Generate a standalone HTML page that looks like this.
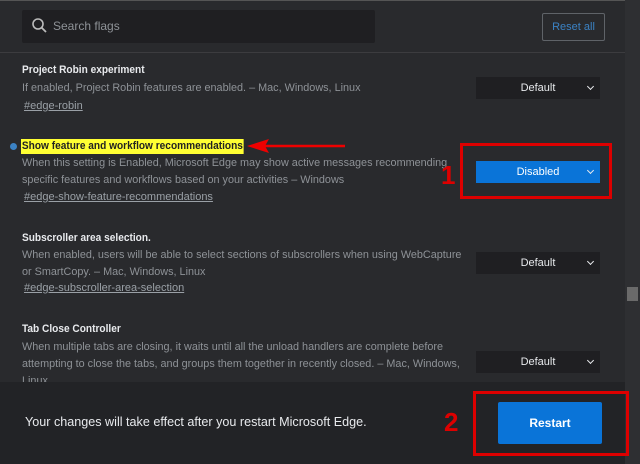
<!DOCTYPE html>
<html><head><style>
body{margin:0;width:640px;height:464px;background:#292a2d;font-family:"Liberation Sans",Arial,sans-serif;position:relative;overflow:hidden;color:#9aa0a6}
.abs{position:absolute}
.t{color:#e8eaed;font-weight:bold;font-size:11px;transform-origin:0 50%;transform:scaleX(0.92);white-space:nowrap}
.d{font-size:11px;line-height:17px;color:#8e9297;white-space:nowrap;transform-origin:0 0;transform:scaleX(0.985)}
.l{font-size:11px;color:#9aa0a6;text-decoration:underline}
.sel{position:absolute;left:476px;width:124px;height:22px;background:#1f1f22;color:#e8eaed;font-size:11px;line-height:22px;text-align:center}
.sel:after{content:"";position:absolute;right:7px;top:7px;width:4px;height:4px;border-right:1.5px solid #e8eaed;border-bottom:1.5px solid #e8eaed;transform:rotate(45deg)}
</style></head><body>
<div class="abs" style="left:0;top:0;width:640px;height:1px;background:#555"></div>
<div class="abs" style="left:0;top:52px;width:625px;height:1px;background:#3c3c3f"></div>
<div class="abs" style="left:22px;top:10px;width:353px;height:33px;background:#1f1f22;border-radius:2px"></div>
<svg class="abs" style="left:31px;top:17px" width="18" height="18" viewBox="0 0 18 18"><circle cx="7" cy="7" r="5" fill="none" stroke="#bbb" stroke-width="1.6"/><path d="M10.5 10.5L15 15" stroke="#bbb" stroke-width="1.8"/></svg>
<div class="abs" style="left:53px;top:19px;font-size:12px;color:#8e9297">Search flags</div>
<div class="abs" style="left:542px;top:13px;width:61px;height:26px;border:1px solid #5f6368;border-radius:2px;color:#3b82c4;font-size:11px;line-height:26px;text-align:center">Reset all</div>

<div class="abs t" style="left:22px;top:64px">Project Robin experiment</div>
<div class="abs d" style="left:22px;top:80px">If enabled, Project Robin features are enabled. – Mac, Windows, Linux</div>
<div class="abs l" style="left:24px;top:100px">#edge-robin</div>
<div class="sel" style="top:77px">Default</div>

<div class="abs" style="left:10px;top:143px;width:7px;height:7px;border-radius:50%;background:#3b82c4"></div>
<div class="abs t" style="left:21px;top:139px;background:#ffff33;color:#222;padding:1px 1px;line-height:13px">Show feature and workflow recommendations</div>
<svg class="abs" style="left:245px;top:136px" width="100" height="20"><path d="M100 10H18" stroke="#e00" stroke-width="2.5"/><path d="M2 10L24 3L20 10L24 17Z" fill="#e00"/></svg>
<div class="abs d" style="left:22px;top:155px">When this setting is Enabled, Microsoft Edge may show active messages recommending<br>specific features and workflows based on your activities – Windows</div>
<div class="abs l" style="left:24px;top:191px">#edge-show-feature-recommendations</div>
<div class="abs" style="left:460px;top:143px;width:152px;height:56px;border:3px solid #d00;box-sizing:border-box"></div>
<div class="sel" style="top:161px;background:#0a74d8;color:#fff">Disabled</div>
<div class="abs" style="left:441px;top:160px;color:#d00;font-weight:bold;font-size:26px">1</div>

<div class="abs t" style="left:22px;top:232px">Subscroller area selection.</div>
<div class="abs d" style="left:22px;top:247px">When enabled, users will be able to select sections of subscrollers when using WebCapture<br>or SmartCopy. – Mac, Windows, Linux</div>
<div class="abs l" style="left:24px;top:282px">#edge-subscroller-area-selection</div>
<div class="sel" style="top:252px">Default</div>

<div class="abs t" style="left:22px;top:323px">Tab Close Controller</div>
<div class="abs d" style="left:22px;top:339px">When multiple tabs are closing, it waits until all the unload handlers are complete before<br>attempting to close the tabs, and groups them together in recently closed. – Mac, Windows,<br>Linux</div>
<div class="sel" style="top:351px">Default</div>

<div class="abs" style="left:625px;top:0;width:15px;height:464px;background:#2e2f32"></div>
<div class="abs" style="left:627px;top:287px;width:11px;height:14px;background:#6a6a6a"></div>

<div class="abs" style="left:0;top:382px;width:625px;height:82px;background:#222326"></div>
<div class="abs" style="left:25px;top:415px;color:#e8eaed;font-size:12.6px">Your changes will take effect after you restart Microsoft Edge.</div>
<div class="abs" style="left:444px;top:407px;color:#d00;font-weight:bold;font-size:26px">2</div>
<div class="abs" style="left:473px;top:391px;width:156px;height:65px;border:3px solid #d00;box-sizing:border-box"></div>
<div class="abs" style="left:498px;top:402px;width:104px;height:42px;background:#0a74d8;border-radius:2px;color:#fff;font-weight:bold;font-size:12px;line-height:42px;text-align:center">Restart</div>
</body></html>
